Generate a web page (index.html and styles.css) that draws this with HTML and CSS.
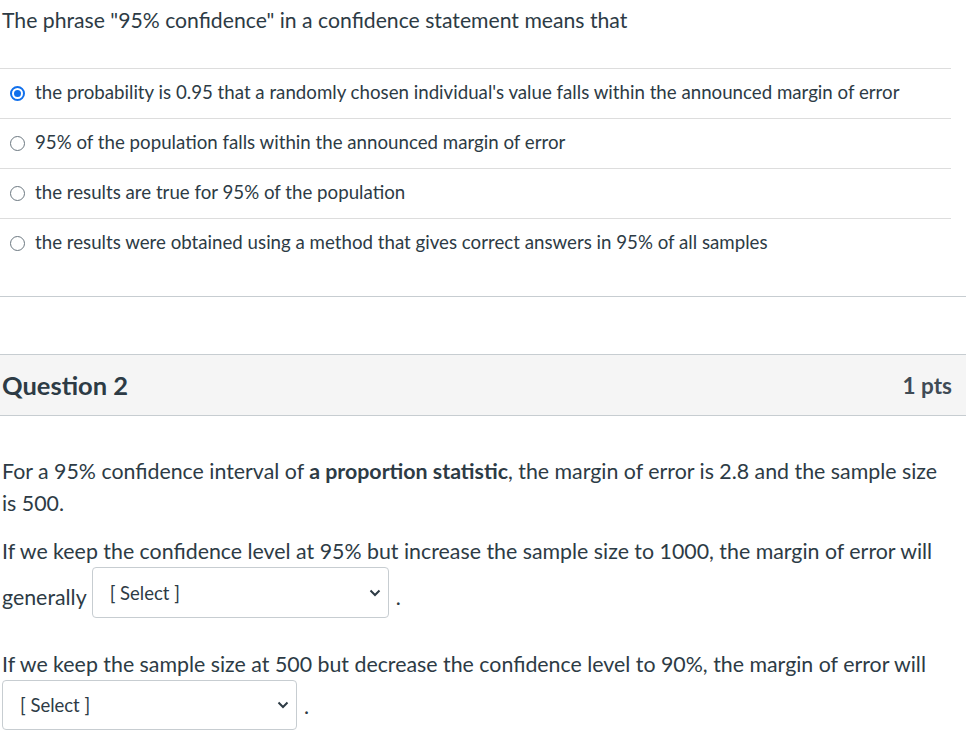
FILE: index.html
```html
<!DOCTYPE html>
<html>
<head>
<meta charset="utf-8">
<link rel="stylesheet" href="styles.css">
</head>
<body>
<div class="q1">
  <div class="q1-text">The phrase "95% confidence" in a confidence statement means that</div>
  <div class="answers">
    <div class="answer"><span class="radio checked"></span><span class="answer-label">the probability is 0.95 that a randomly chosen individual's value falls within the announced margin of error</span></div>
    <div class="answer"><span class="radio"></span><span class="answer-label">95% of the population falls within the announced margin of error</span></div>
    <div class="answer"><span class="radio"></span><span class="answer-label">the results are true for 95% of the population</span></div>
    <div class="answer"><span class="radio"></span><span class="answer-label">the results were obtained using a method that gives correct answers in 95% of all samples</span></div>
  </div>
</div>
<div class="q2">
  <div class="q2-header">
    <span class="q2-name">Question 2</span>
    <span class="q2-pts">1 pts</span>
  </div>
  <div class="q2-body">
    <p class="para">For a 95% confidence interval of <b>a proportion statistic</b>, the margin of error is 2.8 and the sample size is 500.</p>
    <p class="para para2">If we keep the confidence level at 95% but increase the sample size to 1000, the margin of error will generally<span class="select sel1"><span class="sel-text">[ Select ]</span><svg class="chev" width="12" height="8" viewBox="0 0 12 8"><path d="M1.5 1.5 L6 6 L10.5 1.5" fill="none" stroke="#2d3b45" stroke-width="2"/></svg></span>.</p>
    <p class="para para3">If we keep the sample size at 500 but decrease the confidence level to 90%, the margin of error will <span class="select sel2"><span class="sel-text">[ Select ]</span><svg class="chev" width="12" height="8" viewBox="0 0 12 8"><path d="M1.5 1.5 L6 6 L10.5 1.5" fill="none" stroke="#2d3b45" stroke-width="2"/></svg></span>.</p>
  </div>
</div>
</body>
</html>
```
FILE: styles.css
```css
html, body {
  margin: 0;
  padding: 0;
  background: #ffffff;
}
body {
  font-family: Lato, "Open Sans", sans-serif;
  color: #2d3b45;
}
.q1 {
  border-bottom: 1px solid #c7cdd1;
}
.q1-text {
  font-size: 21.2px;
  line-height: 26px;
  padding: 7px 0 0 2px;
  height: 68px;
  box-sizing: border-box;
}
.answers {
  margin-right: 15px;
  padding-bottom: 28px;
}
.answer {
  display: flex;
  align-items: center;
  height: 50px;
  box-sizing: border-box;
  border-top: 1px solid #dddddd;
  padding-bottom: 3px;
  font-size: 18.7px;
}
.radio {
  width: 15px;
  height: 15px;
  border: 1px solid #6b7780;
  border-radius: 50%;
  box-sizing: border-box;
  margin: 2px 10px 0 10px;
  flex: none;
  position: relative;
  background: #fff;
}
.radio.checked {
  border: 2px solid #1170ec;
}
.radio.checked::after {
  content: "";
  position: absolute;
  left: 2px;
  top: 2px;
  width: 7px;
  height: 7px;
  border-radius: 50%;
  background: #1170ec;
}
.q2 {
  margin-top: 57px;
}
.q2-header {
  display: flex;
  justify-content: space-between;
  align-items: center;
  height: 62px;
  box-sizing: border-box;
  background: #f5f5f5;
  border-top: 1px solid #c7cdd1;
  border-bottom: 1px solid #c7cdd1;
  padding: 0 14px 0 2px;
}
.q2-name {
  font-size: 25.5px;
  font-weight: 700;
}
.q2-pts {
  font-size: 22.5px;
  font-weight: 700;
  color: #3f4b55;
}
.q2-body {
  padding: 39px 20px 0 2px;
  font-size: 21.35px;
  line-height: 32px;
}
.para {
  margin: 0 0 16px 0;
}
.para2 {
  margin-bottom: 30px;
}
.para b {
  font-weight: 700;
}
.select {
  display: inline-flex;
  align-items: center;
  justify-content: space-between;
  vertical-align: 5px;
  box-sizing: border-box;
  height: 51px;
  border: 1px solid #c7cdd1;
  border-radius: 4px;
  padding: 0 7px 0 17px;
  margin-right: 7px;
  font-size: 18.5px;
  background: #fff;
}
.sel1 {
  width: 297px;
  margin-left: 5px;
}
.sel2 {
  width: 295px;
  height: 50px;
  vertical-align: 2px;
}
```
